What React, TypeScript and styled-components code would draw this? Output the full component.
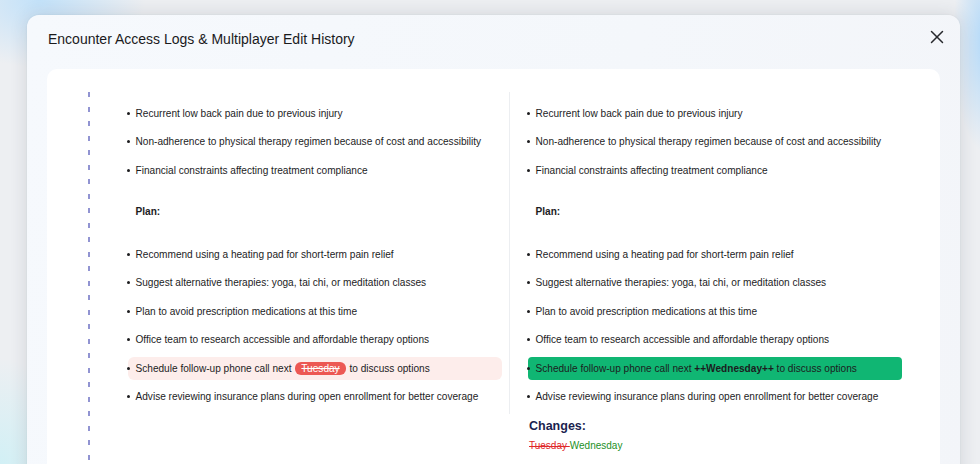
import React from 'react';
import styled, { createGlobalStyle } from 'styled-components';
import { X } from 'lucide-react';

const GlobalStyle = createGlobalStyle`
  html, body {
    margin: 0;
    padding: 0;
  }
  body {
    font-family: "Liberation Sans", Arial, Helvetica, sans-serif;
    color: #1c1c1e;
    -webkit-font-smoothing: antialiased;
  }
`;

const Page = styled.div`
  height: 464px;
  overflow: hidden;
  box-sizing: border-box;
  padding: 15px 20px 0 27px;
  background:
    radial-gradient(ellipse 140px 90px at 40px 0px, rgba(190, 224, 250, 0.9), transparent 75%),
    radial-gradient(ellipse 40px 140px at 985px 40px, rgba(170, 214, 250, 0.9), transparent 80%),
    radial-gradient(ellipse 90px 140px at 0px 470px, rgba(205, 240, 246, 0.9), transparent 80%),
    #edeff2;
`;

const Modal = styled.div`
  height: 520px;
  border-radius: 12px;
  background: linear-gradient(100deg, #f6f9fd 0%, #f4f7fb 60%, #f3f5f9 100%);
  box-shadow: 0 0 18px rgba(40, 50, 70, 0.14), 0 0 2px rgba(40, 50, 70, 0.08);
  padding: 14px 20px 0 20px;
  box-sizing: border-box;
`;

const Header = styled.div`
  display: flex;
  align-items: center;
  justify-content: space-between;
  height: 20px;
  padding: 0 1px;
`;

const Title = styled.h2`
  margin: 0;
  font-size: 14px;
  font-weight: 400;
  line-height: 20px;
  color: #1a1a1c;
`;

const CloseButton = styled.button`
  border: 0;
  background: none;
  padding: 0;
  margin: -4px -9px 0 0;
  display: flex;
  color: #26282c;
  cursor: pointer;
`;

const Card = styled.div`
  margin-top: 20px;
  background: #fff;
  border-radius: 10px;
  min-height: 420px;
  display: flex;
  padding: 23px 38px 0 41px;
`;

const Timeline = styled.div`
  width: 1.5px;
  flex: none;
  background: repeating-linear-gradient(to bottom, #9194d2 0 5px, transparent 5px 14.5px);
`;

const Columns = styled.div`
  margin-left: 38.5px;
  flex: 1;
  display: grid;
  grid-template-columns: 381px 1fr;
  align-content: start;
`;

const Pane = styled.div<{ $side: 'left' | 'right' }>`
  padding: 9.5px ${p => (p.$side === 'left' ? '7px' : '0')} 0 ${p => (p.$side === 'right' ? '18px' : '0')};
  border-left: ${p => (p.$side === 'right' ? '1px solid #eceef1' : 'none')};
`;

const List = styled.ul`
  list-style: none;
  margin: 0;
  padding: 0;
`;

const Item = styled.li<{ $tone?: 'removed' | 'added' }>`
  position: relative;
  font-size: 10.1px;
  line-height: 23px;
  height: 23px;
  margin-bottom: 5.5px;
  padding-left: 7.5px;
  border-radius: ${p => (p.$tone === 'added' ? '4px' : '6px')};
  white-space: nowrap;
  color: #1c1c1e;
  background: ${p =>
    p.$tone === 'removed' ? '#fdedeb' : p.$tone === 'added' ? '#10b673' : 'transparent'};
  &::before {
    content: '';
    position: absolute;
    left: -1.5px;
    top: 10px;
    width: 3px;
    height: 3px;
    border-radius: 50%;
    background: #1c1c1e;
  }
`;

const Heading = styled.p`
  margin: 22.5px 0 22.5px 7.5px;
  font-size: 10.1px;
  font-weight: 700;
  line-height: 16px;
  color: #1c1c1e;
`;

const Removed = styled.span`
  display: inline-block;
  background: #ec5853;
  color: #fff;
  text-decoration: line-through;
  border-radius: 6px;
  padding: 0 6px;
  line-height: 13px;
  margin: 0 1px;
`;

const Added = styled.strong`
  font-weight: 700;
`;

const Changes = styled.div`
  grid-column: 2;
  padding: 4px 0 0 20px;
`;

const ChangesTitle = styled.h3`
  margin: 0;
  font-size: 12.5px;
  line-height: 16px;
  font-weight: 700;
  color: #1b1f4f;
`;

const DiffLine = styled.div`
  margin-top: 4px;
  font-size: 10px;
  line-height: 16px;
`;

const Del = styled.span`
  color: #e0282a;
  text-decoration: line-through;
`;

const Ins = styled.span`
  color: #23901f;
`;

const problems = [
  'Recurrent low back pain due to previous injury',
  'Non-adherence to physical therapy regimen because of cost and accessibility',
  'Financial constraints affecting treatment compliance',
];

const planBefore = [
  'Recommend using a heating pad for short-term pain relief',
  'Suggest alternative therapies: yoga, tai chi, or meditation classes',
  'Plan to avoid prescription medications at this time',
  'Office team to research accessible and affordable therapy options',
];

const lastItem = 'Advise reviewing insurance plans during open enrollment for better coverage';

function Note({ side }: { side: 'left' | 'right' }) {
  return (
    <Pane $side={side}>
      <List>
        {problems.map(t => <Item key={t}>{t}</Item>)}
      </List>
      <Heading>Plan:</Heading>
      <List>
        {planBefore.map(t => <Item key={t}>{t}</Item>)}
        {side === 'left' ? (
          <Item $tone="removed">
            Schedule follow-up phone call next <Removed>Tuesday</Removed> to discuss options
          </Item>
        ) : (
          <Item $tone="added">
            Schedule follow-up phone call next <Added>++Wednesday++</Added> to discuss options
          </Item>
        )}
        <Item>{lastItem}</Item>
      </List>
    </Pane>
  );
}

export default function App() {
  return (
    <Page>
      <GlobalStyle />
      <Modal>
        <Header>
          <Title>Encounter Access Logs &amp; Multiplayer Edit History</Title>
          <CloseButton aria-label="Close">
            <X size={22} strokeWidth={1.6} />
          </CloseButton>
        </Header>
        <Card>
          <Timeline />
          <Columns>
            <Note side="left" />
            <Note side="right" />
            <Changes>
              <ChangesTitle>Changes:</ChangesTitle>
              <DiffLine>
                <Del>Tuesday </Del>
                <Ins>Wednesday</Ins>
              </DiffLine>
            </Changes>
          </Columns>
        </Card>
      </Modal>
    </Page>
  );
}
